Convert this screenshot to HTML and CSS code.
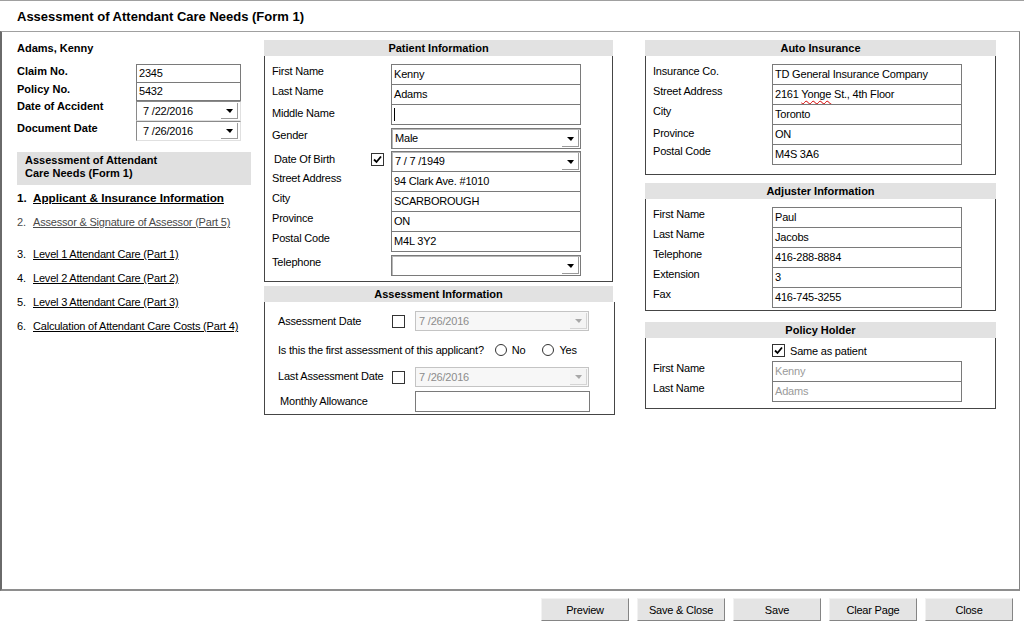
FILE: index.html
```html
<!DOCTYPE html>
<html lang="en">
<head>
  <meta charset="UTF-8">
  <title>Assessment of Attendant Care Needs (Form 1)</title>
  <link rel="stylesheet" href="styles.css">
</head>
<body>

  <div class="window">
    <div class="title-bar">Assessment of Attendant Care Needs (Form 1)</div>

    <div class="frame">

      <!-- left column: claim summary and form sections -->
      <div class="col-left">
        <div class="patient-name">Adams, Kenny</div>
        <div class="claim">
          <div class="lrow"><span class="lbl">Claim No.</span><div class="field sm">2345</div></div>
          <div class="lrow join"><span class="lbl">Policy No.</span><div class="field sm">5432</div></div>
          <div class="lrow"><span class="lbl up">Date of Accident</span><div class="combo sm"><span class="val">7 /22/2016</span><span class="btn"></span></div></div>
          <div class="lrow"><span class="lbl">Document Date</span><div class="combo sm"><span class="val">7 /26/2016</span><span class="btn"></span></div></div>
        </div>

        <div class="nav-head">Assessment of Attendant<br>Care Needs (Form 1)</div>
        <ol class="nav">
          <li class="active"><span class="num">1.</span><a>Applicant &amp; Insurance Information</a></li>
          <li class="muted"><span class="num">2.</span><a>Assessor &amp; Signature of Assessor (Part 5)</a></li>
          <li class="spaced"><span class="num">3.</span><a>Level 1 Attendant Care (Part 1)</a></li>
          <li><span class="num">4.</span><a>Level 2 Attendant Care (Part 2)</a></li>
          <li><span class="num">5.</span><a>Level 3 Attendant Care (Part 3)</a></li>
          <li><span class="num">6.</span><a>Calculation of Attendant Care Costs (Part 4)</a></li>
        </ol>
      </div>

      <!-- middle column -->
      <div class="col-mid">
        <section class="panel">
          <h2 class="panel-title">Patient Information</h2>
          <div class="panel-body patient">
            <div class="row"><span class="lbl">First Name</span><div class="field">Kenny</div></div>
            <div class="row join"><span class="lbl">Last Name</span><div class="field">Adams</div></div>
            <div class="row join"><span class="lbl down">Middle Name</span><div class="field"><span class="caret"></span></div></div>
            <div class="row mt3"><span class="lbl">Gender</span><div class="combo"><span class="val">Male</span><span class="btn"></span></div></div>
            <div class="row mt2">
              <span class="lbl dob">Date Of Birth</span>
              <span class="check on dob-check"><svg width="11" height="11" viewBox="0 0 11 11"><path d="M2 5.5 L4.5 8 L9 2.5" fill="none" stroke="#000" stroke-width="1.8"/></svg></span>
              <div class="combo"><span class="val">7 / 7 /1949</span><span class="btn"></span></div>
            </div>
            <div class="row join"><span class="lbl">Street Address</span><div class="field">94 Clark Ave. #1010</div></div>
            <div class="row join"><span class="lbl">City</span><div class="field">SCARBOROUGH</div></div>
            <div class="row join"><span class="lbl">Province</span><div class="field">ON</div></div>
            <div class="row join"><span class="lbl">Postal Code</span><div class="field">M4L 3Y2</div></div>
            <div class="row mt3"><span class="lbl">Telephone</span><div class="combo"><span class="val"></span><span class="btn"></span></div></div>
          </div>
        </section>

        <section class="panel assess">
          <h2 class="panel-title">Assessment Information</h2>
          <div class="panel-body">
            <div class="arow">
              <span class="lbl">Assessment Date</span>
              <span class="check"></span>
              <div class="combo off"><span class="val">7 /26/2016</span><span class="btn"></span></div>
            </div>
            <div class="arow question">
              <span>Is this the first assessment of this applicant?</span>
              <span class="radio"></span><span class="opt">No</span>
              <span class="radio"></span><span class="opt">Yes</span>
            </div>
            <div class="arow last">
              <span class="lbl">Last Assessment Date</span>
              <span class="check"></span>
              <div class="combo off"><span class="val">7 /26/2016</span><span class="btn"></span></div>
            </div>
            <div class="arow allowance">
              <span class="lbl wide">Monthly Allowance</span>
              <div class="field"></div>
            </div>
          </div>
        </section>
      </div>

      <!-- right column -->
      <div class="col-right">
        <section class="panel">
          <h2 class="panel-title">Auto Insurance</h2>
          <div class="panel-body auto">
            <div class="row"><span class="lbl">Insurance Co.</span><div class="field">TD General Insurance Company</div></div>
            <div class="row join"><span class="lbl">Street Address</span><div class="field">2161 <span class="misspelt">Yonge</span> St., 4th Floor</div></div>
            <div class="row join"><span class="lbl">City</span><div class="field">Toronto</div></div>
            <div class="row join"><span class="lbl down">Province</span><div class="field">ON</div></div>
            <div class="row join"><span class="lbl">Postal Code</span><div class="field">M4S 3A6</div></div>
          </div>
        </section>

        <section class="panel adjuster">
          <h2 class="panel-title">Adjuster Information</h2>
          <div class="panel-body">
            <div class="row"><span class="lbl">First Name</span><div class="field">Paul</div></div>
            <div class="row join"><span class="lbl">Last Name</span><div class="field">Jacobs</div></div>
            <div class="row join"><span class="lbl">Telephone</span><div class="field">416-288-8884</div></div>
            <div class="row join"><span class="lbl">Extension</span><div class="field">3</div></div>
            <div class="row join"><span class="lbl">Fax</span><div class="field">416-745-3255</div></div>
          </div>
        </section>

        <section class="panel holder">
          <h2 class="panel-title">Policy Holder</h2>
          <div class="panel-body">
            <div class="same">
              <span class="check on"><svg width="11" height="11" viewBox="0 0 11 11"><path d="M2 5.5 L4.5 8 L9 2.5" fill="none" stroke="#000" stroke-width="1.8"/></svg></span>
              <span>Same as patient</span>
            </div>
            <div class="row mt4"><span class="lbl">First Name</span><div class="field grey">Kenny</div></div>
            <div class="row join"><span class="lbl">Last Name</span><div class="field grey">Adams</div></div>
          </div>
        </section>
      </div>

    </div>

    <div class="actions">
      <button>Preview</button>
      <button>Save &amp; Close</button>
      <button>Save</button>
      <button>Clear Page</button>
      <button>Close</button>
    </div>
  </div>

</body>
</html>
```

FILE: styles.css
```css
* {
  margin: 0;
  padding: 0;
  box-sizing: border-box;
}
body {
  font-family: "Liberation Sans", Arial, sans-serif;
  font-size: 11px;
  color: #000;
  background: #fff;
  width: 1024px;
  height: 626px;
  overflow: hidden;
}
.window {
  border-top: 1px solid #a0a0a0;
}
.title-bar {
  height: 30px;
  line-height: 31px;
  padding-left: 17px;
  font-size: 13px;
  font-weight: bold;
}
.frame {
  display: flex;
  width: 1020px;
  height: 560px;
  padding: 8px 0 0 15px;
  border-top: 1px solid #a0a0a0;
  border-left: 2px solid #6a6a6a;
  border-right: 1px solid #838383;
  border-bottom: 2px solid #8e8e8e;
}

/* columns */
.col-left {
  width: 234px;
}
.col-mid {
  width: 349px;
  margin-left: 13px;
}
.col-right {
  width: 351px;
  margin-left: 32px;
}

/* shared controls */
.lbl {
  letter-spacing: -0.2px;
  white-space: nowrap;
}
.field {
  width: 190px;
  height: 21px;
  border: 1px solid #7a7a7a;
  background: #fff;
  line-height: 19px;
  padding-left: 2px;
  white-space: nowrap;
  overflow: hidden;
  letter-spacing: -0.2px;
}
.field.grey {
  color: #9a9a9a;
}
.caret {
  display: inline-block;
  width: 1px;
  height: 13px;
  background: #000;
  vertical-align: -3px;
}
.misspelt {
  text-decoration: underline wavy #d40000;
  text-decoration-thickness: 1px;
  text-underline-offset: 2px;
}
.combo {
  display: flex;
  width: 190px;
  height: 21px;
  border: 1px solid #7a7a7a;
  box-shadow: inset 1px 1px 0 #b8b8b8;
  background: #fff;
  letter-spacing: -0.2px;
}
.combo .val {
  flex: 1;
  line-height: 19px;
  padding-left: 3px;
  white-space: nowrap;
}
.combo .btn {
  display: flex;
  align-items: center;
  justify-content: center;
  width: 17px;
  height: 17px;
  margin: 1px 1px 0 0;
  background: #fff;
  border-right: 1px solid #9a9a9a;
  border-bottom: 1px solid #9a9a9a;
}
.combo .btn::after {
  content: "";
  border-left: 4px solid transparent;
  border-right: 3px solid transparent;
  border-top: 4px solid #000;
  margin-top: 1px;
}
.combo.off {
  border-color: #c4c4c4;
  box-shadow: none;
  background: #f7f7f7;
  color: #8c8c8c;
}
.combo.off .btn {
  background: #f4f4f4;
  border-color: #d4d4d4;
}
.combo.off .btn::after {
  border-top-color: #a8a8a8;
}
.check {
  display: inline-flex;
  align-items: center;
  justify-content: center;
  width: 13px;
  height: 13px;
  border: 1px solid #333;
  background: #fff;
  flex-shrink: 0;
}
.radio {
  display: inline-block;
  width: 12px;
  height: 12px;
  border: 1px solid #333;
  border-radius: 50%;
  background: #fff;
}

/* left column */
.patient-name {
  margin-top: 1px;
  line-height: 14px;
  font-weight: bold;
}
.claim {
  margin-top: 9px;
}
.lrow {
  display: flex;
  align-items: flex-start;
}
.lrow .lbl {
  width: 119px;
  line-height: 14px;
  font-weight: bold;
  letter-spacing: 0;
}
.lrow .lbl.up {
  margin-top: -2px;
}
.lrow.join {
  margin-top: -1px;
}
.field.sm {
  width: 105px;
  height: 19px;
  line-height: 17px;
}
.combo.sm {
  width: 105px;
  height: 20px;
  border-color: #8a8a8a #e0e0e0 #e0e0e0 #8a8a8a;
  box-shadow: none;
}
.combo.sm .val {
  line-height: 18px;
  padding-left: 6px;
}
.combo.sm .btn {
  height: 16px;
  margin: 1px 2px 0 0;
}
.nav-head {
  margin-top: 11px;
  height: 33px;
  padding: 2px 8px 0;
  background: #e0e0e0;
  font-weight: bold;
  line-height: 13px;
}
.nav {
  list-style: none;
  margin-top: 5px;
}
.nav li {
  display: flex;
  line-height: 16px;
  letter-spacing: -0.2px;
}
.nav li + li {
  margin-top: 8px;
}
.nav li.spaced {
  margin-top: 16px;
}
.nav .num {
  width: 16px;
}
.nav a {
  text-decoration: underline;
  white-space: nowrap;
}
.nav li.active {
  font-size: 11.7px;
  font-weight: bold;
  letter-spacing: 0;
}
.nav li.muted {
  color: #4a4a4a;
}

/* group panels */
.panel-title {
  height: 16px;
  line-height: 16px;
  background: #e2e2e2;
  text-align: center;
  font-size: 11px;
  font-weight: bold;
}
.panel-body {
  border: 1px solid #454545;
  border-top: none;
  padding: 8px 0 5px 7px;
}
.row {
  display: flex;
  align-items: flex-start;
}
.row .lbl {
  width: 119px;
  padding-top: 1px;
  line-height: 13px;
}
.row .lbl.down {
  padding-top: 3px;
}
.row.join {
  margin-top: -1px;
}
.row.mt2 {
  margin-top: 2px;
}
.row.mt3 {
  margin-top: 3px;
}
.row.mt4 {
  margin-top: 4px;
}
.row .lbl.dob {
  width: 97px;
  margin-left: 2px;
  padding-top: 2px;
}
.dob-check {
  margin: 2px 7px 0 0;
}

/* assessment information */
.assess {
  margin-top: 4px;
}
.assess .panel-body {
  width: 351px;
  padding: 9px 0 2px 13px;
}
.arow {
  display: flex;
  align-items: center;
  height: 20px;
  letter-spacing: -0.2px;
}
.arow .lbl {
  width: 114px;
}
.arow .combo {
  width: 174px;
  height: 20px;
  margin-left: 10px;
}
.arow .combo .btn {
  height: 16px;
}
.arow.question {
  height: 14px;
  margin-top: 12px;
}
.arow.question .radio {
  margin-left: 11px;
}
.arow.question .radio + .opt {
  margin-left: 5px;
}
.arow.question .opt + .radio {
  margin-left: 17px;
}
.arow.last {
  margin-top: 10px;
}
.arow.last .lbl {
  margin-top: -3px;
}
.arow.allowance {
  height: 21px;
  margin-top: 4px;
}
.arow .lbl.wide {
  width: 135px;
  margin-left: 2px;
  margin-top: -2px;
}
.arow .field {
  width: 175px;
}

/* right column */
.auto {
  padding-bottom: 9px;
}
.adjuster {
  margin-top: 8px;
}
.adjuster .panel-body {
  padding-bottom: 2px;
}
.holder {
  margin-top: 11px;
}
.holder .panel-body {
  padding: 6px 0 6px 7px;
}
.same {
  display: flex;
  align-items: center;
  height: 13px;
  padding-left: 119px;
  letter-spacing: -0.2px;
}
.same .check {
  margin-right: 5px;
}

/* bottom buttons */
.actions {
  display: flex;
  justify-content: flex-end;
  gap: 8px;
  padding: 7px 11px 0 0;
}
.actions button {
  width: 88px;
  height: 23px;
  font-family: "Liberation Sans", Arial, sans-serif;
  font-size: 11px;
  letter-spacing: -0.2px;
  color: #000;
  background: #e4e4e4;
  border: 1px solid;
  border-color: #f2f2f2 #858585 #858585 #f2f2f2;
  cursor: pointer;
}
.actions button:hover {
  background: #e9f1fb;
}
```
